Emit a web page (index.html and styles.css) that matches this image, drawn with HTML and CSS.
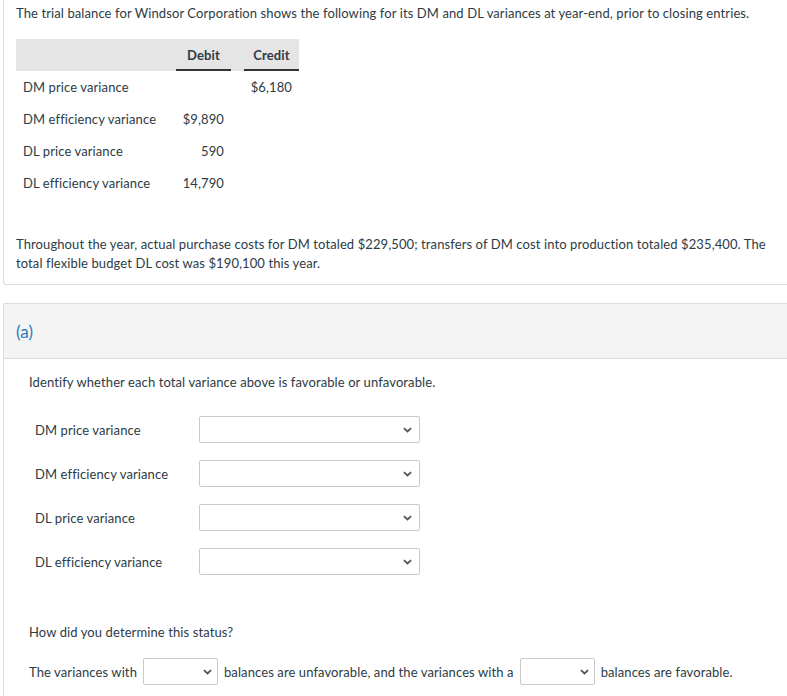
FILE: index.html
```html
<!DOCTYPE html>
<html>
<head>
<meta charset="utf-8">
<link rel="stylesheet" href="styles.css">
</head>
<body>
<div class="page">
  <div class="card intro">
    <p class="lead">The trial balance for Windsor Corporation shows the following for its DM and DL variances at year-end, prior to closing entries.</p>
    <div class="tb">
      <div class="tb-head">
        <div class="c-label"></div>
        <div class="c-num"><span class="hd">Debit</span></div>
        <div class="c-gap"></div>
        <div class="c-num"><span class="hd">Credit</span></div>
      </div>
      <div class="tb-row">
        <div class="c-label">DM price variance</div>
        <div class="c-num"></div>
        <div class="c-gap"></div>
        <div class="c-num">$6,180</div>
      </div>
      <div class="tb-row">
        <div class="c-label">DM efficiency variance</div>
        <div class="c-num">$9,890</div>
        <div class="c-gap"></div>
        <div class="c-num"></div>
      </div>
      <div class="tb-row">
        <div class="c-label">DL price variance</div>
        <div class="c-num">590</div>
        <div class="c-gap"></div>
        <div class="c-num"></div>
      </div>
      <div class="tb-row">
        <div class="c-label">DL efficiency variance</div>
        <div class="c-num">14,790</div>
        <div class="c-gap"></div>
        <div class="c-num"></div>
      </div>
    </div>
    <p class="para">Throughout the year, actual purchase costs for DM totaled $229,500; transfers of DM cost into production totaled $235,400. The total flexible budget DL cost was $190,100 this year.</p>
  </div>

  <div class="card part">
    <div class="part-head">(a)</div>
    <div class="part-body">
      <p class="q">Identify whether each total variance above is favorable or unfavorable.</p>
      <div class="rows">
        <div class="row"><span class="lbl">DM price variance</span><div class="sel wide"><svg class="chev" viewBox="0 0 10 6"><path d="M1 1 L5 4.6 L9 1" fill="none" stroke="#555" stroke-width="2"/></svg></div></div>
        <div class="row"><span class="lbl">DM efficiency variance</span><div class="sel wide"><svg class="chev" viewBox="0 0 10 6"><path d="M1 1 L5 4.6 L9 1" fill="none" stroke="#555" stroke-width="2"/></svg></div></div>
        <div class="row"><span class="lbl">DL price variance</span><div class="sel wide"><svg class="chev" viewBox="0 0 10 6"><path d="M1 1 L5 4.6 L9 1" fill="none" stroke="#555" stroke-width="2"/></svg></div></div>
        <div class="row"><span class="lbl">DL efficiency variance</span><div class="sel wide"><svg class="chev" viewBox="0 0 10 6"><path d="M1 1 L5 4.6 L9 1" fill="none" stroke="#555" stroke-width="2"/></svg></div></div>
      </div>
      <p class="q how">How did you determine this status?</p>
      <div class="inline">
        <span>The variances with</span>
        <div class="sel small"><svg class="chev" viewBox="0 0 10 6"><path d="M1 1 L5 4.6 L9 1" fill="none" stroke="#555" stroke-width="2"/></svg></div>
        <span>balances are unfavorable, and the variances with a</span>
        <div class="sel small"><svg class="chev" viewBox="0 0 10 6"><path d="M1 1 L5 4.6 L9 1" fill="none" stroke="#555" stroke-width="2"/></svg></div>
        <span>balances are favorable.</span>
      </div>
    </div>
  </div>
</div>
</body>
</html>
```
FILE: styles.css
```css
html, body {
  margin: 0;
  padding: 0;
  background: #fff;
}
body {
  font-family: Lato, "Open Sans", sans-serif;
  font-size: 13px;
  letter-spacing: 0.1px;
  color: #2d3b45;
  overflow: hidden;
}
.page {
  width: 787px;
  height: 696px;
  overflow: hidden;
  padding-left: 3px;
  box-sizing: border-box;
}
p { margin: 0; }
.card {
  border: 1px solid #dcdcdc;
  border-radius: 3px;
  width: 820px;
  box-sizing: border-box;
  background: #fff;
}
.intro {
  border-top: none;
  border-top-left-radius: 0;
  padding: 1px 0 11px 12px;
  margin-top: -1px;
}
.lead {
  line-height: 19px;
  padding-top: 4px;
}
.tb {
  margin-top: 16px;
  width: 283px;
}
.tb-head, .tb-row {
  display: grid;
  grid-template-columns: 160px 55px 13px 55px;
  height: 32px;
  align-items: center;
}
.tb-head {
  background: #e5e5e5;
  align-items: stretch;
}
.tb-head .c-num {
  display: flex;
  align-items: center;
  justify-content: center;
  border-bottom: 2px solid #333;
  font-weight: 700;
  height: 32px;
  box-sizing: border-box;
  padding-top: 1px;
}
.tb-row .c-label {
  padding-left: 7px;
}
.tb-row .c-num {
  text-align: right;
  padding-right: 7px;
}
.para {
  margin-top: 36px;
  line-height: 19px;
  width: 754px;
}
.part {
  margin-top: 18px;
  border-top-left-radius: 0;
  padding-bottom: 60px;
}
.part-head {
  background: #f4f4f4;
  height: 54px;
  border-bottom: 1px solid #dcdcdc;
  display: flex;
  align-items: center;
  padding-left: 12px;
  font-size: 17px;
  color: #2a7ab8;
}
.part-body {
  padding: 14px 0 0 25px;
}
.q {
  line-height: 19px;
}
.rows {
  margin-top: 24px;
  display: flex;
  flex-direction: column;
  gap: 17px;
  padding-left: 6px;
}
.row {
  display: flex;
  align-items: center;
  height: 27px;
}
.lbl {
  width: 164px;
}
.sel {
  height: 27px;
  border: 1px solid #cacaca;
  border-radius: 2px;
  box-sizing: border-box;
  background: #fff;
  display: flex;
  align-items: center;
  justify-content: flex-end;
}
.sel.wide {
  width: 221px;
  padding-right: 7px;
}
.sel.small {
  width: 75px;
  padding-right: 5px;
}
.chev {
  width: 9px;
  height: 6px;
}
.how {
  margin-top: 48px;
}
.inline {
  margin-top: 16px;
  display: flex;
  align-items: center;
  gap: 6px;
}
```
